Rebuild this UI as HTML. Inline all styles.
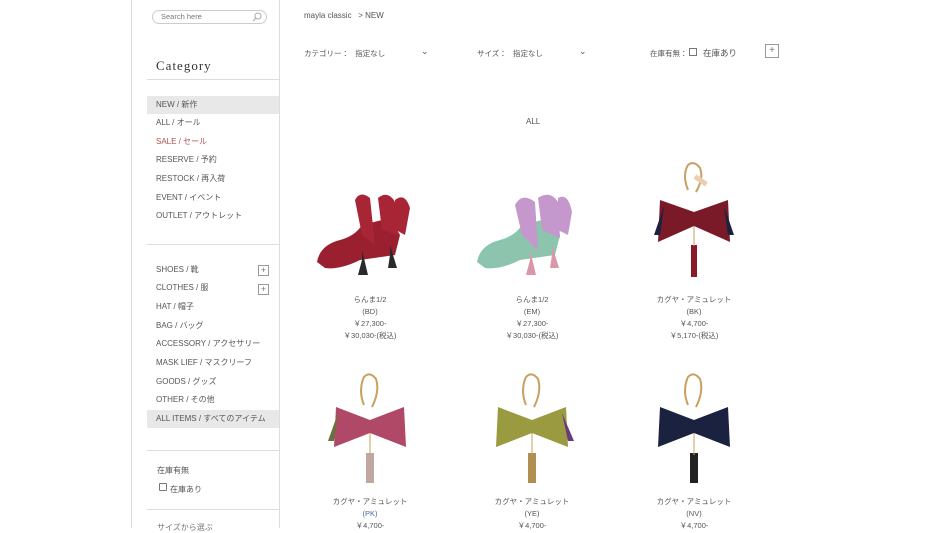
<!DOCTYPE html>
<html><head><meta charset="utf-8"><style>
*{margin:0;padding:0;box-sizing:border-box}
body{width:945px;height:528px;overflow:hidden;background:#fff;font-family:"Liberation Sans","Noto Sans CJK JP",sans-serif;color:#555;font-size:8px;position:relative}
.abs{position:absolute}
.vl{position:absolute;top:0;height:528px;width:1px;background:#ddd}
.hl{position:absolute;left:147px;width:132px;height:1px;background:#ddd}
.cat{position:absolute;left:147px;width:132px;height:18px;line-height:18px;padding-left:9px;font-size:8px;color:#555}
.plus{position:absolute;left:258px;width:11px;height:11px;border:1px solid #999;font-size:9px;line-height:9px;text-align:center;color:#777}
.prod{position:absolute;width:140px;text-align:center;font-size:7.5px;line-height:12px;color:#555}
</style></head><body>
<div class="vl" style="left:131px"></div>
<div class="vl" style="left:279px"></div>
<div class="abs" style="left:152px;top:10px;width:115px;height:14px;border:1px solid #ccc;border-radius:7px;font-size:7.5px;line-height:12px;padding-left:8px;color:#777">Search here</div>
<svg class="abs" style="left:252px;top:12px" width="10" height="10"><circle cx="6" cy="4" r="3" fill="none" stroke="#aaa"/><line x1="4" y1="6" x2="1" y2="9" stroke="#aaa"/></svg>
<div class="abs" style="left:156px;top:58px;font-family:'Liberation Serif',serif;font-size:13px;color:#333;letter-spacing:1px">Category</div>
<div class="hl" style="top:79px"></div>
<div class="cat" style="top:96px;background:#e8e8e8">NEW / 新作</div>
<div class="cat" style="top:114px">ALL / オール</div>
<div class="cat" style="top:133px;color:#b0524d">SALE / セール</div>
<div class="cat" style="top:151px">RESERVE / 予約</div>
<div class="cat" style="top:170px">RESTOCK / 再入荷</div>
<div class="cat" style="top:189px">EVENT / イベント</div>
<div class="cat" style="top:207px">OUTLET / アウトレット</div>
<div class="hl" style="top:244px"></div>
<div class="cat" style="top:261px">SHOES / 靴</div><div class="plus" style="top:265px">+</div>
<div class="cat" style="top:279px">CLOTHES / 服</div><div class="plus" style="top:284px">+</div>
<div class="cat" style="top:298px">HAT / 帽子</div>
<div class="cat" style="top:317px">BAG / バッグ</div>
<div class="cat" style="top:335px">ACCESSORY / アクセサリー</div>
<div class="cat" style="top:354px">MASK LIEF / マスクリーフ</div>
<div class="cat" style="top:373px">GOODS / グッズ</div>
<div class="cat" style="top:391px">OTHER / その他</div>
<div class="cat" style="top:410px;background:#e8e8e8">ALL ITEMS / すべてのアイテム</div>
<div class="hl" style="top:450px"></div>
<div class="abs" style="left:157px;top:465px">在庫有無</div>
<div class="abs" style="left:159px;top:483px;width:8px;height:8px;border:1px solid #777;border-radius:1px"></div>
<div class="abs" style="left:170px;top:484px">在庫あり</div>
<div class="hl" style="top:509px"></div>
<div class="abs" style="left:157px;top:522px;color:#777">サイズから選ぶ</div>

<div class="abs" style="left:304px;top:11px;font-size:8px">mayla classic &nbsp; &gt; NEW</div>
<div class="abs" style="left:304px;top:48px;font-size:7.5px">カテゴリー： &nbsp; 指定なし</div>
<div class="abs" style="left:421px;top:46px;font-size:9px">⌄</div>
<div class="abs" style="left:477px;top:48px;font-size:7.5px">サイズ： &nbsp; 指定なし</div>
<div class="abs" style="left:579px;top:46px;font-size:9px">⌄</div>
<div class="abs" style="left:650px;top:48px;font-size:7.5px">在庫有無：</div>
<div class="abs" style="left:689px;top:48px;width:8px;height:8px;border:1px solid #777"></div>
<div class="abs" style="left:703px;top:47px;font-size:8.5px">在庫あり</div>
<div class="abs" style="left:765px;top:44px;width:14px;height:14px;border:1px solid #999;text-align:center;line-height:12px;font-size:10px;color:#777">+</div>
<div class="abs" style="left:526px;top:117px;font-size:8px">ALL</div>

<svg class="abs" style="left:300px;top:150px" width="480" height="378">
<defs>
<g id="shoe"><path d="M17 112 Q20 95 40 90 Q52 88 60 80 L80 70 L100 85 L95 105 L60 110 Q40 118 25 118 Z" fill="var(--b)"/></g>
</defs>
<g><path d="M17 112 Q20 95 40 90 Q55 86 62 75 L90 68 L100 85 L95 105 L60 110 Q40 120 25 118 Z" fill="#9a2030"/>
<path d="M55 50 Q60 40 70 48 L75 95 L62 85Z M78 48 Q88 40 95 52 L98 85 L82 80Z M95 50 Q105 42 110 58 L105 85 L96 80Z" fill="#a82535"/>
<path d="M62 100 L68 125 L58 125 L62 110Z M90 95 L97 118 L88 118 L90 105Z" fill="#2a2a2a"/></g>
<g transform="translate(160,0)"><path d="M17 112 Q20 95 40 90 Q55 86 62 75 L90 68 L100 85 L95 105 L60 110 Q40 120 25 118 Z" fill="#8cc4ae"/>
<path d="M55 55 Q62 42 75 52 L78 100 L62 85Z M78 48 Q90 40 98 52 L100 88 L82 80Z M98 48 Q108 42 112 62 L108 85 L98 80Z" fill="#c498cc"/>
<path d="M70 100 L76 125 L66 125 L70 110Z M92 95 L99 118 L90 118 L92 105Z" fill="#d898a8"/></g>
<g transform="translate(324,0)"><path d="M64 40 Q58 25 64 15 Q70 10 76 18 Q80 28 72 42" fill="none" stroke="#c9a060" stroke-width="2"/><rect x="70" y="28" width="14" height="5" fill="#e8d0b0" transform="rotate(35 77 30)"/>
<path d="M36 50 L70 62 L104 50 L106 92 L70 76 L34 92Z" fill="#7a1a28"/><path d="M40 56 L36 85 L30 85Z M100 56 L104 85 L110 85Z" fill="#1a2240"/>
<rect x="67" y="95" width="6" height="32" fill="#8a1a28"/><line x1="70" y1="76" x2="70" y2="96" stroke="#c9a060"/></g>
<g transform="translate(0,215)"><path d="M64 40 Q58 25 64 12 Q70 6 76 14 Q80 26 72 42" fill="none" stroke="#c9a060" stroke-width="2"/>
<path d="M36 42 L70 55 L104 42 L106 82 L70 68 L34 82Z" fill="#b04868"/><path d="M38 48 L34 76 L28 76Z" fill="#6a7040"/>
<rect x="66" y="88" width="8" height="30" fill="#c0a8a0"/><line x1="70" y1="68" x2="70" y2="90" stroke="#c9a060"/></g>
<g transform="translate(162,215)"><path d="M64 40 Q58 25 64 12 Q70 6 76 14 Q80 26 72 42" fill="none" stroke="#c9a060" stroke-width="2"/>
<path d="M36 42 L70 55 L104 42 L106 82 L70 68 L34 82Z" fill="#9a9a40"/><path d="M100 48 L106 76 L112 76Z" fill="#6a3a7a"/>
<rect x="66" y="88" width="8" height="30" fill="#b09050"/><line x1="70" y1="68" x2="70" y2="90" stroke="#c9a060"/></g>
<g transform="translate(324,215)"><path d="M64 40 Q58 25 64 12 Q70 6 76 14 Q80 26 72 42" fill="none" stroke="#c9a060" stroke-width="2"/>
<path d="M36 42 L70 55 L104 42 L106 82 L70 68 L34 82Z" fill="#1a2240"/>
<rect x="66" y="88" width="8" height="30" fill="#222"/><line x1="70" y1="68" x2="70" y2="90" stroke="#c9a060"/></g>
</svg>

<div class="prod" style="left:300px;top:294px">らんま1/2<br>(BD)<br>￥27,300-<br>￥30,030-(税込)</div>
<div class="prod" style="left:462px;top:294px">らんま1/2<br>(EM)<br>￥27,300-<br>￥30,030-(税込)</div>
<div class="prod" style="left:624px;top:294px">カグヤ・アミュレット<br>(BK)<br>￥4,700-<br>￥5,170-(税込)</div>
<div class="prod" style="left:300px;top:496px">カグヤ・アミュレット<br><span style="color:#4a6aa0">(PK)</span><br>￥4,700-</div>
<div class="prod" style="left:462px;top:496px">カグヤ・アミュレット<br>(YE)<br>￥4,700-</div>
<div class="prod" style="left:624px;top:496px">カグヤ・アミュレット<br>(NV)<br>￥4,700-</div>
</body></html>
